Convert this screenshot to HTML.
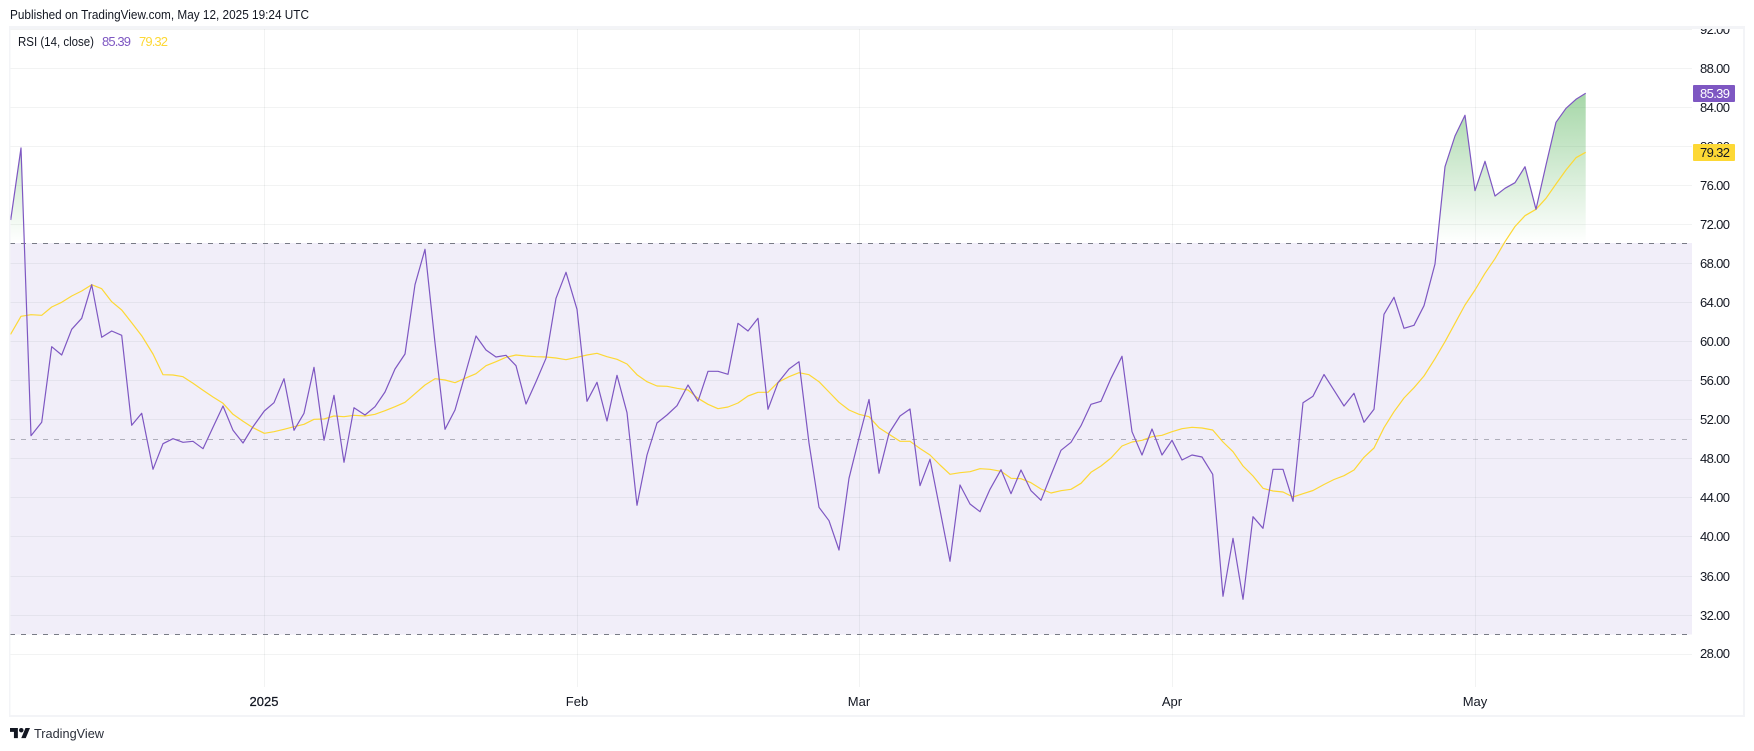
<!DOCTYPE html>
<html><head><meta charset="utf-8"><title>RSI chart</title>
<style>
html,body{margin:0;padding:0;background:#fff;width:1754px;height:751px;overflow:hidden}
svg{display:block}
text{font-family:"Liberation Sans",sans-serif;fill:#131722}
.ax{font-size:13px}
</style></head><body>
<svg width="1754" height="751" viewBox="0 0 1754 751" xmlns="http://www.w3.org/2000/svg">
<defs>
<linearGradient id="g" gradientUnits="userSpaceOnUse" x1="0" y1="93" x2="0" y2="243">
<stop offset="0" stop-color="#4caf50" stop-opacity=".5"/><stop offset="1" stop-color="#4caf50" stop-opacity="0"/>
</linearGradient>
<clipPath id="c"><rect x="10" y="29" width="1682" height="658"/></clipPath>
</defs>
<rect x="10" y="243" width="1682" height="391.5" fill="#f1eef9"/>
<g stroke="rgba(42,46,57,.06)" stroke-width="1" fill="none">
<path d="M10 29.5H1692M10 68.5H1692M10 107.5H1692M10 146.5H1692M10 185.5H1692M10 224.5H1692M10 263.5H1692M10 302.5H1692M10 341.5H1692M10 380.5H1692M10 419.5H1692M10 458.5H1692M10 497.5H1692M10 536.5H1692M10 576.5H1692M10 615.5H1692M10 654.5H1692"/>
<path d="M264.5 29V687M577.5 29V687M859.5 29V687M1172.5 29V687M1475.5 29V687"/>
</g>
<g fill="none" stroke-width="1" stroke-dasharray="5 6">
<path d="M10 243.5H1692M10 634.5H1692" stroke="#787b86"/>
<path d="M10 439.5H1692" stroke="#787b86" stroke-opacity=".55"/>
</g>
<g clip-path="url(#c)">
<polygon fill="url(#g)" points="10.7,243.5 10.7,220 21,148 24.3,243.5"/>
<polygon fill="url(#g)" points="1437.2,243.5 1445,166.7 1455,136 1465,115.3 1475,190.7 1485,161.3 1495,196 1505,188.3 1515,182.7 1525,166.7 1536,209.3 1546,165 1556,122.3 1566,108.3 1576,99.3 1585.7,93.3 1585.7,243.5"/>
<polyline fill="none" stroke="#fdd835" stroke-width="1.2" stroke-linejoin="round" points="10.5,334.5 21,316.3 31,314.7 41.7,315.3 51.7,307 61.7,302.3 71.7,296 81.7,291 91.7,284.7 101.7,288.7 111.7,301.7 121.7,310 131.7,322.7 141.7,335.7 153,354 163,374.7 173,375 183,376.7 193,383.3 203,390.3 213,397 223,403.3 233,414.3 243,421.3 253,427.7 264.3,433.3 274,431.7 284,429.3 294,426.7 304,424.3 314,419.3 324,419 334,416 344,416.7 354,415.3 365,416 375,414.3 385,410.7 395,406.7 405,402.3 415,393.7 425,385 435,378.7 445,380 455,382.7 465,378.3 476,373.7 486,365.7 496,361.7 506,357.3 516,355 526,356 536,356.7 546,357 556,358 566,359.7 577,357.3 587,355 597,353.3 607,356.7 617,359.3 627,364 637,374.7 647,381.7 657,386 667,386.3 677,388.3 688,390 698,398.3 708,404.3 718,408.7 728,407 738,403 748,396 758,392.3 768,392.3 778,382.3 789,376.7 799,372.7 809,374.7 819,381.7 829,392 839,402.3 849,410 859,414.3 869,416.7 879,427.7 889,434.3 900,441.3 910,441.3 920,448.5 930,455 940,465 950,474.3 960,472.7 970,471.7 980,468.7 990,469.3 1001,471.3 1011,478.3 1021,478.7 1031,482.7 1041,489 1051,493 1061,490.7 1071,489.3 1081,483.3 1091,472.3 1101,466 1111,458 1122,446 1132,442 1142,440.3 1152,436.7 1162,435.3 1172,431.7 1182,428.7 1192,427.3 1202,428 1212.7,430 1223,442 1233,451.7 1243,466 1253,476 1263,488.3 1273,491 1283,492 1293,497 1303,493.7 1313,490.5 1324,484.5 1334,479.5 1344,475.7 1354,470 1364,457.3 1374,448 1384,427.7 1394,411.7 1404,398 1414,387.7 1424,376 1435,358.7 1445,341.7 1455,323.3 1465,305 1475,290 1485,273.3 1495,258.7 1505,241.7 1515,226.5 1525,215.7 1536,209.3 1546,198.3 1556,184 1566,170 1576,157.7 1585.7,152.3"/>
<polyline fill="none" stroke="#7e57c2" stroke-width="1.2" stroke-linejoin="round" points="10.7,220 21,148 31,435.7 41.7,422.3 51.7,346.7 61.7,355 71.7,329.3 81.7,318.3 91.7,284.7 101.7,337.3 111.7,331 121.7,335.3 131.7,425.3 141.7,413.3 153,469.3 163,443.7 173,438.7 183,442.3 193,441.3 203,448.7 213,427.3 223,406 233,430.3 243,443 253,426.7 264.3,411 274,402.7 284,378.7 294,430.3 304,413.3 314,367.3 324,440.3 334,395.3 344,462.3 354,407.7 365,415 375,406.7 385,392 395,369 405,354 415,284.7 425,249.3 435,343 445,429.3 455,410 465,375 476,336 486,350 496,357 506,355.3 516,365.7 526,404 536,381.7 546,358.3 556,298.3 566,272.3 577,309.3 587,401.3 597,382.3 607,421 617,375.3 627,412.7 637,505.3 647,455 657,423 667,415 677,405.7 688,385 698,401.3 708,371.3 718,371.3 728,374.3 738,323.3 748,331 758,318.3 768,409.3 778,382.7 789,369 799,361.7 809,443 819,507.3 829,520.7 839,550 849,478.3 859,438 869,399.5 879,473.3 889,433.3 900,416 910,409 920,485.7 930,459.3 940,510 950,561.3 960,485 970,504 980,511.7 990,489.3 1001,469.7 1011,493.7 1021,470 1031,490.7 1041,500.3 1051,475 1061,450.3 1071,442.3 1081,425.7 1091,404.3 1101,401.3 1111,378.3 1122,356.3 1132,431.7 1142,455 1152,429 1162,455 1172,440.3 1182,460 1192,455 1202,457 1212.7,474.3 1223,596.3 1233,538.3 1243,599.3 1253,516.7 1263,528.3 1273,469.3 1283,469.3 1293,501.3 1303,402.7 1313,396.2 1324,374.5 1334,390.2 1344,406 1354,393.3 1364,422.3 1374,409.3 1384,314.3 1394,297.3 1404,328.3 1414,325.3 1424,305.7 1435,264 1445,166.7 1455,136 1465,115.3 1475,190.7 1485,161.3 1495,196 1505,188.3 1515,182.7 1525,166.7 1536,209.3 1546,165 1556,122.3 1566,108.3 1576,99.3 1585.7,93.3"/>
</g>
<g class="ax">
<text x="1700" y="34" textLength="30">92.00</text>
<text x="1700" y="73" textLength="30">88.00</text>
<text x="1700" y="112" textLength="30">84.00</text>
<text x="1700" y="151" textLength="30">80.00</text>
<text x="1700" y="190" textLength="30">76.00</text>
<text x="1700" y="229" textLength="30">72.00</text>
<text x="1700" y="268" textLength="30">68.00</text>
<text x="1700" y="307" textLength="30">64.00</text>
<text x="1700" y="346" textLength="30">60.00</text>
<text x="1700" y="385" textLength="30">56.00</text>
<text x="1700" y="424" textLength="30">52.00</text>
<text x="1700" y="463" textLength="30">48.00</text>
<text x="1700" y="502" textLength="30">44.00</text>
<text x="1700" y="541" textLength="30">40.00</text>
<text x="1700" y="581" textLength="30">36.00</text>
<text x="1700" y="620" textLength="30">32.00</text>
<text x="1700" y="658" textLength="30">28.00</text>
</g>
<rect x="1693" y="85" width="42" height="17" rx="1" fill="#7e57c2"/>
<text x="1700" y="98" class="ax" textLength="30" style="fill:#fff">85.39</text>
<rect x="1693" y="144" width="42" height="17" rx="1" fill="#fdd835"/>
<text x="1700" y="157" class="ax" textLength="30">79.32</text>
<rect x="0" y="0" width="1754" height="26" fill="#fff"/>
<rect x="9" y="26" width="1736" height="3" fill="#f3f4f7"/>
<rect x="9" y="26" width="1.5" height="691" fill="#f3f4f7"/>
<rect x="1743" y="26" width="2" height="691" fill="#f3f4f7"/>
<rect x="9" y="715" width="1736" height="2" fill="#f3f4f7"/>
<text x="10" y="19" font-size="12.5" textLength="299" lengthAdjust="spacingAndGlyphs">Published on TradingView.com, May 12, 2025 19:24 UTC</text>
<text x="18" y="46" class="ax" textLength="76" lengthAdjust="spacingAndGlyphs">RSI (14, close)</text>
<text x="102" y="46" class="ax" textLength="29" style="fill:#7e57c2">85.39</text>
<text x="139" y="46" class="ax" textLength="29" style="fill:#fdd835">79.32</text>
<g class="ax" text-anchor="middle">
<text x="264" y="706" style="stroke:#131722;stroke-width:.25">2025</text>
<text x="577" y="706">Feb</text>
<text x="859" y="706">Mar</text>
<text x="1172" y="706">Apr</text>
<text x="1475" y="706">May</text>
</g>
<g transform="translate(10,725.7) scale(.563)" fill="#131722">
<path d="M14 22H7V11H0V4h14v18zM28 22h-8l7.5-18h8L28 22z"/><circle cx="20" cy="8" r="4"/>
</g>
<text x="34" y="738" class="ax" textLength="70" lengthAdjust="spacingAndGlyphs" style="fill:#2a2e39">TradingView</text>
</svg>
</body></html>
